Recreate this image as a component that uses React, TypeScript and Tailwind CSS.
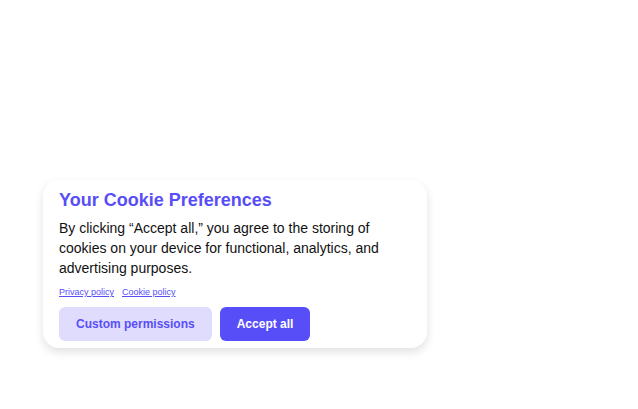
export default function App() {
    return (
        <div className="min-h-screen bg-white pt-[180px] pl-[43px]" style={{ fontFamily: '"Liberation Sans", Arial, sans-serif' }}>
            <div className="w-[384px] rounded-2xl bg-white px-4 pt-1.5 pb-[7px] shadow-[0_4px_10px_rgba(0,0,0,0.12)]">
                <h2 className="text-lg leading-7 font-bold text-[#584ef8]">Your Cookie Preferences</h2>
                <p className="mt-1 text-sm leading-5 text-[#111111]">
                    By clicking “Accept all,” you agree to the storing of cookies on your device for functional, analytics, and advertising purposes.
                </p>
                <div className="mt-[7px] flex gap-2 text-[9px] leading-[15px]">
                    <a href="#" className="text-[#584ef8] underline">Privacy policy</a>
                    <a href="#" className="text-[#584ef8] underline">Cookie policy</a>
                </div>
                <div className="mt-[7px] flex gap-2">
                    <button className="h-[34px] rounded-md bg-[#dfdcfd] px-[17px] text-xs font-bold text-[#584ef8]">
                        Custom permissions
                    </button>
                    <button className="h-[34px] rounded-md bg-[#584ef8] px-[17px] text-xs font-bold text-white">
                        Accept all
                    </button>
                </div>
            </div>
        </div>
    );
}
